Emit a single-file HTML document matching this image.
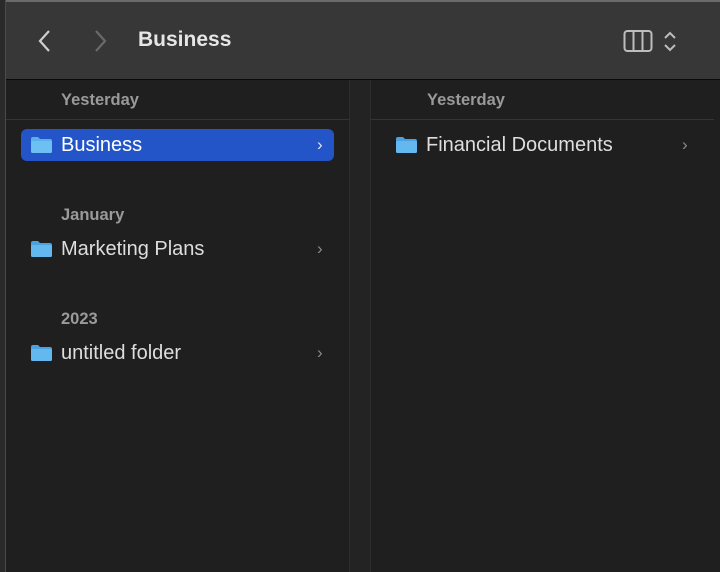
<!DOCTYPE html>
<html><head><style>
*{margin:0;padding:0;box-sizing:border-box}
body{width:720px;height:572px;background:#1e1e1e;font-family:"Liberation Sans",sans-serif;overflow:hidden;position:relative}
.edge{position:absolute;left:0;top:0;width:6px;height:572px;background:#2a2a2a;border-right:1px solid #4a4a4a}
.tb{position:absolute;left:6px;top:0;width:714px;height:80px;background:#373737;border-top:2px solid #6a6a6a;border-bottom:1px solid #0a0a0a}
.title{position:absolute;left:132px;top:26px;color:#e6e6e6;font-weight:bold;font-size:21px}
.col{position:absolute;top:80px;height:492px;background:#1f1f1f}
.c1{left:6px;width:343px}
.sep{position:absolute;top:80px;left:349px;width:22px;height:492px;background:#232323;border-left:1px solid #2e2e2e;border-right:1px solid #2e2e2e}
.c2{left:371px;width:349px}
.hdr{position:absolute;color:#9a9a9a;font-weight:bold;font-size:16.5px}
.line{position:absolute;height:1px;background:#353535}
.item{position:absolute;height:32px;color:#dedede;font-size:20px;line-height:32px}
.sel{background:#2355c9;border-radius:6px;color:#fff}
.fold{position:absolute;top:7px;width:21px;height:17px}
.chev{position:absolute;top:0;color:#8a8a8a;font-size:17px}
</style></head><body>
<div class="edge"></div>
<div class="tb">
<svg style="position:absolute;left:32px;top:27px" width="14" height="24"><path d="M11 2 L2 12 L11 22" stroke="#cfcfcf" stroke-width="2.2" fill="none"/></svg>
<svg style="position:absolute;left:87px;top:27px" width="14" height="24"><path d="M3 2 L12 12 L3 22" stroke="#6a6a6a" stroke-width="2.2" fill="none"/></svg>
<div class="title">Business</div>
<svg style="position:absolute;left:617px;top:27px" width="30" height="26"><rect x="1.5" y="2" width="27" height="20" rx="3" stroke="#bdbdbd" stroke-width="2" fill="none"/><path d="M10.5 2v20M19.5 2v20" stroke="#bdbdbd" stroke-width="2"/></svg>
<svg style="position:absolute;left:657px;top:28px" width="14" height="24"><path d="M2 8 L7 3 L12 8M2 15 L7 20 L12 15" stroke="#bdbdbd" stroke-width="2" fill="none"/></svg>
</div>
<div class="col c1"></div><div class="sep"></div><div class="col c2"></div>
<div class="hdr" style="left:61px;top:91px">Yesterday</div>
<div class="line" style="left:6px;top:119px;width:343px"></div>
<div class="hdr" style="left:427px;top:91px">Yesterday</div>
<div class="line" style="left:371px;top:119px;width:343px"></div>

<div class="item sel" style="left:21px;top:129px;width:313px"><svg class="fold" style="left:10px" viewBox="0 0 21 17"><path d="M0 3a2 2 0 0 1 2-2h5l2 2h10a2 2 0 0 1 2 2v10a2 2 0 0 1-2 2H2a2 2 0 0 1-2-2z" fill="#5ab1ea"/><rect x="0" y="5" width="21" height="12" rx="1.5" fill="#6cc0f2"/></svg><span style="position:absolute;left:40px">Business</span><span class="chev" style="left:296px;color:#dfe6f8">›</span></div>

<div class="hdr" style="left:61px;top:206px">January</div>
<div class="item" style="left:21px;top:233px;width:313px"><svg class="fold" style="left:10px" viewBox="0 0 21 17"><path d="M0 3a2 2 0 0 1 2-2h5l2 2h10a2 2 0 0 1 2 2v10a2 2 0 0 1-2 2H2a2 2 0 0 1-2-2z" fill="#4aa3e0"/><rect x="0" y="5" width="21" height="12" rx="1.5" fill="#62b8ef"/></svg><span style="position:absolute;left:40px">Marketing Plans</span><span class="chev" style="left:296px">›</span></div>

<div class="hdr" style="left:61px;top:310px">2023</div>
<div class="item" style="left:21px;top:337px;width:313px"><svg class="fold" style="left:10px" viewBox="0 0 21 17"><path d="M0 3a2 2 0 0 1 2-2h5l2 2h10a2 2 0 0 1 2 2v10a2 2 0 0 1-2 2H2a2 2 0 0 1-2-2z" fill="#4aa3e0"/><rect x="0" y="5" width="21" height="12" rx="1.5" fill="#62b8ef"/></svg><span style="position:absolute;left:40px">untitled folder</span><span class="chev" style="left:296px">›</span></div>

<div class="item" style="left:386px;top:129px;width:313px"><svg class="fold" style="left:10px" viewBox="0 0 21 17"><path d="M0 3a2 2 0 0 1 2-2h5l2 2h10a2 2 0 0 1 2 2v10a2 2 0 0 1-2 2H2a2 2 0 0 1-2-2z" fill="#4aa3e0"/><rect x="0" y="5" width="21" height="12" rx="1.5" fill="#62b8ef"/></svg><span style="position:absolute;left:40px">Financial Documents</span><span class="chev" style="left:296px">›</span></div>
</body></html>
